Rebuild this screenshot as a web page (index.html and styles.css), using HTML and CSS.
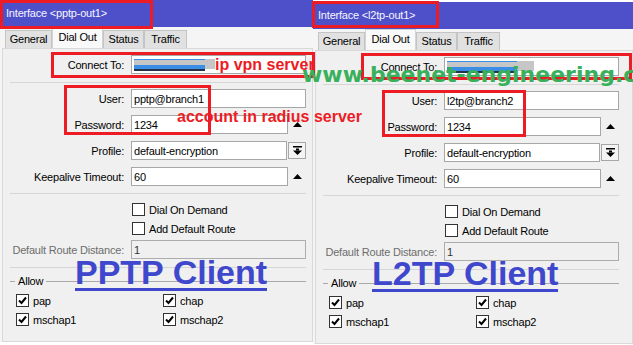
FILE: index.html
```html
<!DOCTYPE html>
<html lang="en">
<head>
    <meta charset="UTF-8">
    <title>PPTP / L2TP Client - Dial Out</title>
    <link rel="stylesheet" href="styles.css">
</head>
<body>
    <div class="shot">
        <div class="window">
            <div class="titlebar">Interface &lt;pptp-out1&gt;</div>
            <div class="tabs">
                <span class="tab tab-general">General</span>
                <span class="tab tab-dialout active">Dial Out</span>
                <span class="tab tab-status">Status</span>
                <span class="tab tab-traffic">Traffic</span>
            </div>
            <div class="page">
                <div class="row">
                    <span class="label">Connect To:</span>
                    <div class="field"><span class="input"><span class="redact"></span></span></div>
                </div>
                <div class="sep"></div>
                <div class="rows">
                    <div class="row">
                        <span class="label">User:</span>
                        <div class="field"><span class="input">pptp@branch1</span></div>
                    </div>
                    <div class="row">
                        <span class="label">Password:</span>
                        <div class="field">
                            <span class="input">1234</span>
                            <span class="spin"><svg width="9" height="5" viewBox="0 0 9 5"><path d="M0 5L4.5 0L9 5z"/></svg></span>
                        </div>
                    </div>
                    <div class="row">
                        <span class="label">Profile:</span>
                        <div class="field">
                            <span class="input">default-encryption</span>
                            <span class="drop"><svg width="9" height="9" viewBox="0 0 9 9"><rect x="0" y="0" width="9" height="1.5"/><rect x="3" y="2.5" width="3" height="2"/><path d="M0 4.5h9L4.5 9z"/></svg></span>
                        </div>
                    </div>
                    <div class="row">
                        <span class="label">Keepalive Timeout:</span>
                        <div class="field">
                            <span class="input">60</span>
                            <span class="spin"><svg width="9" height="5" viewBox="0 0 9 5"><path d="M0 5L4.5 0L9 5z"/></svg></span>
                        </div>
                    </div>
                </div>
                <div class="sep sep-mid"></div>
                <div class="check-row"><span class="box"></span>Dial On Demand</div>
                <div class="check-row"><span class="box"></span>Add Default Route</div>
                <div class="row row-disabled">
                    <span class="label">Default Route Distance:</span>
                    <div class="field"><span class="input">1</span></div>
                </div>
                <div class="sep sep-low"></div>
                <div class="group-title">Allow</div>
                <div class="allow">
                    <span class="check"><span class="box"><svg width="11" height="11" viewBox="0 0 11 11"><path d="M2 5.5l2.5 2.5 4.5-5.5"/></svg></span>pap</span>
                    <span class="check"><span class="box"><svg width="11" height="11" viewBox="0 0 11 11"><path d="M2 5.5l2.5 2.5 4.5-5.5"/></svg></span>chap</span>
                    <span class="check"><span class="box"><svg width="11" height="11" viewBox="0 0 11 11"><path d="M2 5.5l2.5 2.5 4.5-5.5"/></svg></span>mschap1</span>
                    <span class="check"><span class="box"><svg width="11" height="11" viewBox="0 0 11 11"><path d="M2 5.5l2.5 2.5 4.5-5.5"/></svg></span>mschap2</span>
                </div>
            </div>
        </div>

        <div class="window window-right">
            <div class="titlebar">Interface &lt;l2tp-out1&gt;</div>
            <div class="tabs">
                <span class="tab tab-general">General</span>
                <span class="tab tab-dialout active">Dial Out</span>
                <span class="tab tab-status">Status</span>
                <span class="tab tab-traffic">Traffic</span>
            </div>
            <div class="page">
                <div class="row">
                    <span class="label">Connect To:</span>
                    <div class="field"><span class="input"><span class="redact redact-wide"></span></span></div>
                </div>
                <div class="sep"></div>
                <div class="rows">
                    <div class="row">
                        <span class="label">User:</span>
                        <div class="field"><span class="input">l2tp@branch2</span></div>
                    </div>
                    <div class="row">
                        <span class="label">Password:</span>
                        <div class="field">
                            <span class="input">1234</span>
                            <span class="spin"><svg width="9" height="5" viewBox="0 0 9 5"><path d="M0 5L4.5 0L9 5z"/></svg></span>
                        </div>
                    </div>
                    <div class="row">
                        <span class="label">Profile:</span>
                        <div class="field">
                            <span class="input">default-encryption</span>
                            <span class="drop"><svg width="9" height="9" viewBox="0 0 9 9"><rect x="0" y="0" width="9" height="1.5"/><rect x="3" y="2.5" width="3" height="2"/><path d="M0 4.5h9L4.5 9z"/></svg></span>
                        </div>
                    </div>
                    <div class="row">
                        <span class="label">Keepalive Timeout:</span>
                        <div class="field">
                            <span class="input">60</span>
                            <span class="spin"><svg width="9" height="5" viewBox="0 0 9 5"><path d="M0 5L4.5 0L9 5z"/></svg></span>
                        </div>
                    </div>
                </div>
                <div class="sep sep-mid"></div>
                <div class="check-row"><span class="box"></span>Dial On Demand</div>
                <div class="check-row"><span class="box"></span>Add Default Route</div>
                <div class="row row-disabled">
                    <span class="label">Default Route Distance:</span>
                    <div class="field"><span class="input">1</span></div>
                </div>
                <div class="sep sep-low"></div>
                <div class="group-title">Allow</div>
                <div class="allow">
                    <span class="check"><span class="box"><svg width="11" height="11" viewBox="0 0 11 11"><path d="M2 5.5l2.5 2.5 4.5-5.5"/></svg></span>pap</span>
                    <span class="check"><span class="box"><svg width="11" height="11" viewBox="0 0 11 11"><path d="M2 5.5l2.5 2.5 4.5-5.5"/></svg></span>chap</span>
                    <span class="check"><span class="box"><svg width="11" height="11" viewBox="0 0 11 11"><path d="M2 5.5l2.5 2.5 4.5-5.5"/></svg></span>mschap1</span>
                    <span class="check"><span class="box"><svg width="11" height="11" viewBox="0 0 11 11"><path d="M2 5.5l2.5 2.5 4.5-5.5"/></svg></span>mschap2</span>
                </div>
            </div>
        </div>

        <!-- annotations drawn over the screenshot -->
        <div class="mark mark-pptp-title"></div>
        <div class="mark mark-pptp-server"></div>
        <div class="mark mark-pptp-account"></div>
        <div class="mark mark-l2tp-title"></div>
        <div class="mark mark-l2tp-server"></div>
        <div class="mark mark-l2tp-account"></div>

        <div class="note note-server">ip vpn server</div>
        <div class="note note-account">account in radius server</div>
        <div class="watermark">www.beenet-engineering.com</div>
        <div class="caption caption-pptp">PPTP Client</div>
        <div class="caption caption-l2tp">L2TP Client</div>
    </div>
</body>
</html>
```

FILE: styles.css
```css
body {
    margin: 0;
    background: #fff;
}
.shot {
    position: relative;
    display: flex;
    align-items: flex-start;
    width: 633px;
    height: 345px;
    overflow: hidden;
    font-family: "Liberation Sans", Arial, sans-serif;
    font-size: 11px;
    letter-spacing: -0.2px;
    color: #000;
}
.window {
    flex: none;
    width: 313px;
    background: #f5f5f5;
}
.window-right {
    width: 320px;
    margin-top: 2px;
}
.titlebar {
    height: 27px;
    line-height: 27px;
    padding-left: 6px;
    background: #4e50c9;
    color: #f6f6ff;
    white-space: nowrap;
}
.window-right .titlebar {
    padding-left: 5px;
}
.tabs {
    display: flex;
    align-items: flex-end;
    height: 21px;
    padding-left: 5px;
}
.tab {
    box-sizing: border-box;
    height: 18px;
    line-height: 17px;
    text-align: center;
    background: #e1e1e1;
    border: 1px solid #c4c4c4;
    border-bottom: none;
}
.tab.active {
    height: 21px;
    line-height: 18px;
    background: #f9f9f9;
    border-color: #d4d4d4;
}
.tab-general { width: 47px; }
.tab-dialout { width: 51px; }
.tab-status { width: 41px; }
.tab-traffic { width: 43px; }
.page {
    box-sizing: border-box;
    display: flex;
    flex-direction: column;
    height: 294px;
    margin-left: 2px;
    padding: 6px 6px 0 0;
    background: #f0f0f0;
    border: 1px solid #d9d9d9;
}
.window-right .page {
    padding-right: 13px;
}
.row {
    display: flex;
    align-items: center;
    gap: 7px;
    height: 19px;
}
.rows {
    display: flex;
    flex-direction: column;
    gap: 7px;
}
.label {
    flex: none;
    width: 121px;
    text-align: right;
    white-space: nowrap;
}
.field {
    flex: 1;
    display: flex;
    align-items: center;
    height: 19px;
}
.input {
    box-sizing: border-box;
    flex: 1;
    display: flex;
    align-items: center;
    height: 19px;
    padding: 0 2px;
    background: #fff;
    border: 1px solid #a7a7a7;
    white-space: nowrap;
}
.spin {
    flex: none;
    width: 18px;
    display: flex;
    justify-content: center;
}
.drop {
    box-sizing: border-box;
    flex: none;
    width: 18px;
    height: 17px;
    margin-left: 1px;
    display: flex;
    align-items: center;
    justify-content: center;
    background: #f4f4f4;
    border: 1px solid #a7a7a7;
}
.redact {
    display: inline-block;
    width: 81px;
    height: 12px;
    background:
        linear-gradient(#c6c6c6, #c6c6c6) 0 1px / 100% 5px no-repeat,
        linear-gradient(to right, #3a8ee6 71px, #c6c6c6 71px) 0 0 / 100% 10px no-repeat,
        linear-gradient(to right, #26324a 71px, transparent 71px) 0 10px / 100% 2px no-repeat;
}
.redact-wide {
    width: 87px;
    background:
        linear-gradient(#c6c6c6, #c6c6c6) 0 1px / 100% 5px no-repeat,
        linear-gradient(to right, #3a8ee6 70px, #c6c6c6 70px) 0 0 / 100% 10px no-repeat,
        linear-gradient(to right, #26324a 70px, transparent 70px) 0 10px / 100% 2px no-repeat;
}
.sep {
    height: 1px;
    margin: 8px 0 6px 7px;
    background: #d6d6d6;
}
.sep-mid {
    margin-top: 7px;
}
.sep-low {
    margin-bottom: 0;
}
.check-row {
    display: flex;
    align-items: center;
    gap: 4px;
    height: 19px;
    padding-left: 129px;
}
.box {
    box-sizing: border-box;
    flex: none;
    width: 13px;
    height: 13px;
    display: flex;
    align-items: center;
    justify-content: center;
    background: #fff;
    border: 1px solid #333;
}
.box path {
    fill: none;
    stroke: #000;
    stroke-width: 2;
}
.row-disabled {
    margin-top: 2px;
}
.row-disabled .label {
    color: #6d6d6d;
}
.row-disabled .input {
    background: #f0f0f0;
    border-color: #adadad;
    color: #333;
}
.group-title {
    display: flex;
    align-items: center;
    gap: 3px;
    height: 14px;
    margin: 6px 0 0 7px;
}
.group-title::before,
.group-title::after {
    content: "";
    height: 1px;
    background: #a9a9a9;
}
.group-title::before {
    width: 5px;
}
.group-title::after {
    flex: 1;
}
.allow {
    display: grid;
    grid-template-columns: 147px 1fr;
    grid-auto-rows: 19px;
    margin-top: 3px;
    padding-left: 13px;
}
.check {
    display: flex;
    align-items: center;
    gap: 4px;
}

/* annotations */
.mark {
    position: absolute;
    box-sizing: border-box;
    border: 3px solid #ed1c24;
}
.mark-pptp-title { left: 0; top: 0; width: 153px; height: 29px; }
.mark-pptp-server { left: 51px; top: 52px; width: 264px; height: 26px; }
.mark-pptp-account { left: 64px; top: 85px; width: 147px; height: 50px; }
.mark-l2tp-title { left: 312px; top: 1px; width: 127px; height: 27px; }
.mark-l2tp-server { left: 361px; top: 53px; width: 271px; height: 27px; }
.mark-l2tp-account { left: 382px; top: 90px; width: 144px; height: 47px; }
.note {
    position: absolute;
    font-family: "Liberation Sans", Arial, sans-serif;
    font-weight: bold;
    font-size: 16px;
    line-height: 16px;
    letter-spacing: 0;
    color: #ed1c24;
    white-space: nowrap;
}
.note-server { left: 215px; top: 57px; }
.note-account { left: 177px; top: 109px; }
.watermark {
    position: absolute;
    left: 302px;
    top: 64px;
    font-family: "DejaVu Sans", Verdana, sans-serif;
    font-weight: bold;
    font-size: 22px;
    line-height: 22px;
    letter-spacing: 0;
    color: #38b05c;
    white-space: nowrap;
}
.caption {
    position: absolute;
    top: 257px;
    font-family: "Liberation Sans", Arial, sans-serif;
    font-weight: bold;
    font-size: 34px;
    line-height: 31px;
    letter-spacing: 0;
    color: #3f48cc;
    border-bottom: 3px solid #3f48cc;
    white-space: nowrap;
}
.caption-pptp { left: 75px; }
.caption-l2tp { left: 372px; top: 258px; }
```
